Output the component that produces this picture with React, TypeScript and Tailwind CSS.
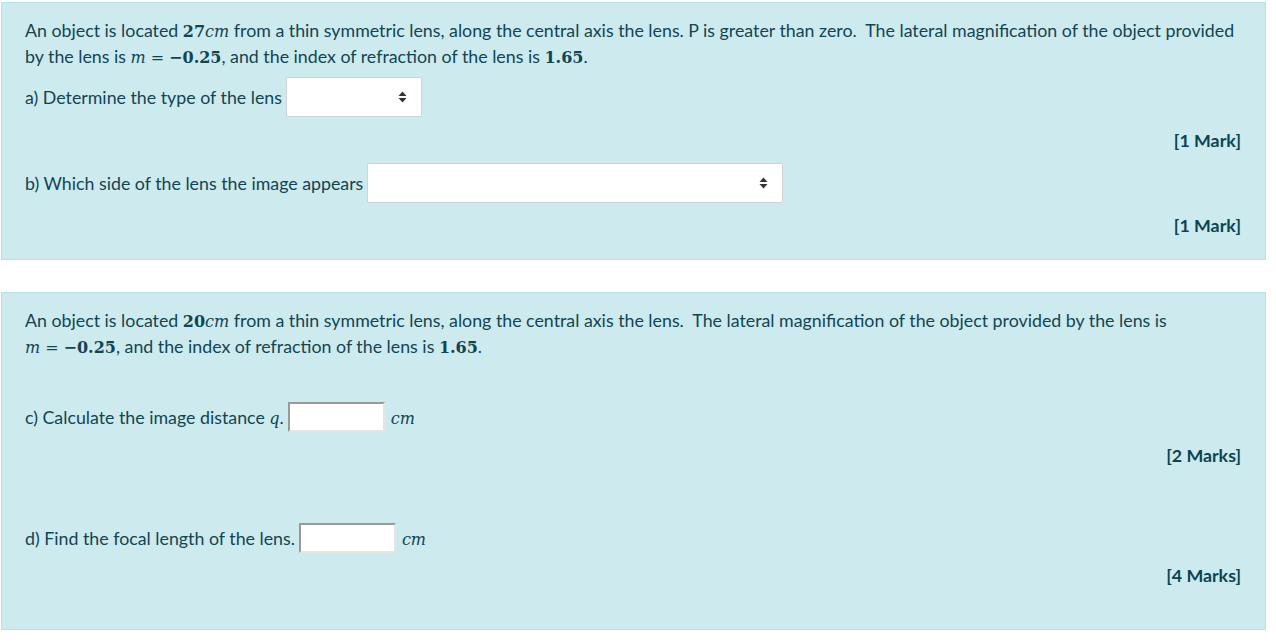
import React from 'react';

const M: React.FC<{ children: React.ReactNode; b?: boolean }> = ({ children, b }) => (
    <span
        className={`font-['DejaVu_Serif','Liberation_Serif',serif] text-[16px] leading-none ${b ? 'font-bold' : 'italic'}`}
    >
        {children}
    </span>
);

const Eq: React.FC = () => (
    <span className="font-['DejaVu_Serif',serif] text-[16px] leading-none mx-[5px]">=</span>
);

const SelectBox: React.FC<{ w: string }> = ({ w }) => (
    <div className={`${w} h-[40px] bg-white border border-[#cfd4d9] rounded-[2px] flex items-center justify-end pr-[14px]`}>
        <svg width="9" height="12" viewBox="0 0 9 12">
            <path d="M4.5 0.5 L8.5 5 H0.5 Z" fill="#333" />
            <path d="M4.5 11.5 L8.5 7 H0.5 Z" fill="#333" />
        </svg>
    </div>
);

const InputBox: React.FC = () => (
    <div className="w-[97px] h-[30px] bg-white border-2 border-t-[#999] border-l-[#999] border-b-[#e5e5e5] border-r-[#e5e5e5]" />
);

const Mark: React.FC<{ text: string }> = ({ text }) => (
    <div className="flex justify-end pr-[1px] h-[26px] items-center font-bold text-[#0a4552]">{text}</div>
);

export default function App() {
    return (
        <div className="min-h-[643px] bg-white pt-[2px] pl-[1px] pr-[10px] font-['Lato','Noto_Sans',sans-serif] text-[17.8px] leading-[26px] text-[#124552]">
            <div className="bg-[#cdeaef] border border-[#b6e1e7] pt-[14px] pb-[21px] pl-[23px] pr-[23px]">
                <p>
                    An object is located <M b>27</M><M>cm</M> from a thin symmetric lens, along the central axis the lens. P is greater than zero.&nbsp; The lateral magnification of the object provided
                    <br />
                    by the lens is <M>m</M><Eq /><M b>−0.25</M>, and the index of refraction of the lens is <M b>1.65</M>.
                </p>
                <div className="mt-[8px] flex items-center gap-[4px]">
                    <span>a) Determine the type of the lens</span>
                    <SelectBox w="w-[136px]" />
                </div>
                <div className="mt-[10px]">
                    <Mark text="[1 Mark]" />
                </div>
                <div className="mt-[10px] flex items-center gap-[4px]">
                    <span>b) Which side of the lens the image appears</span>
                    <SelectBox w="w-[416px]" />
                </div>
                <div className="mt-[9px]">
                    <Mark text="[1 Mark]" />
                </div>
            </div>

            <div className="mt-[32px] bg-[#cdeaef] border border-[#b6e1e7] pt-[14px] pb-[41px] pl-[23px] pr-[23px]">
                <p>
                    An object is located <M b>20</M><M>cm</M> from a thin symmetric lens, along the central axis the lens.&nbsp; The lateral magnification of the object provided by the lens is
                    <br />
                    <M>m</M><Eq /><M b>−0.25</M>, and the index of refraction of the lens is <M b>1.65</M>.
                </p>
                <div className="mt-[43px] flex items-center gap-[4px]">
                    <span>
                        c) Calculate the image distance <M>q</M>.
                    </span>
                    <InputBox />
                    <span className="ml-[2px]">
                        <M>cm</M>
                    </span>
                </div>
                <div className="mt-[10px]">
                    <Mark text="[2 Marks]" />
                </div>
                <div className="mt-[55px] flex items-center gap-[4px]">
                    <span>d) Find the focal length of the lens.</span>
                    <InputBox />
                    <span className="ml-[2px]">
                        <M>cm</M>
                    </span>
                </div>
                <div className="mt-[9px]">
                    <Mark text="[4 Marks]" />
                </div>
            </div>
        </div>
    );
}
